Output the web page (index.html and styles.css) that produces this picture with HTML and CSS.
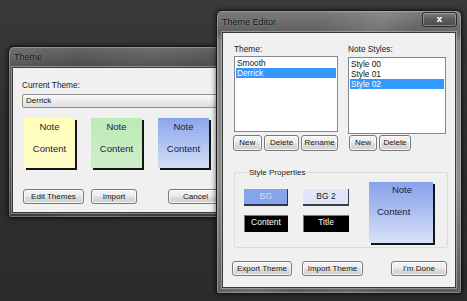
FILE: index.html
```html
<!DOCTYPE html>
<html lang="en">
<head>
<meta charset="utf-8">
<title>Theme Editor</title>
<link rel="stylesheet" href="styles.css">
</head>
<body>
<div class="desk">
  <div class="win back">
    <div class="tbar"><span class="ttl">Theme</span></div>
    <div class="client back-client">
      <div class="lbl">Current Theme:</div>
      <div class="combo">Derrick</div>
      <div class="notes">
        <div class="note yellow"><span class="n-title">Note</span><span class="n-body">Content</span></div>
        <div class="note green"><span class="n-title">Note</span><span class="n-body">Content</span></div>
        <div class="note blue"><span class="n-title">Note</span><span class="n-body">Content</span></div>
      </div>
      <div class="btnrow back-btns">
        <button class="btn b-edit">Edit Themes</button>
        <button class="btn b-imp">Import</button>
        <button class="btn b-cancel">Cancel</button>
      </div>
    </div>
  </div>

  <div class="win front">
    <div class="tbar"><span class="ttl">Theme Editor</span><span class="close">x</span></div>
    <div class="client front-client">
      <div class="lists">
        <div class="col col1">
          <div class="lbl">Theme:</div>
          <div class="listbox lb1">
            <div class="item">Smooth</div>
            <div class="item sel">Derrick</div>
          </div>
          <div class="btnrow sm-btns">
            <button class="btn w29">New</button>
            <button class="btn w36">Delete</button>
            <button class="btn w37">Rename</button>
          </div>
        </div>
        <div class="col col2">
          <div class="lbl">Note Styles:</div>
          <div class="listbox lb2">
            <div class="item">Style 00</div>
            <div class="item">Style 01</div>
            <div class="item sel">Style 02</div>
          </div>
          <div class="btnrow sm-btns2">
            <button class="btn w28">New</button>
            <button class="btn w32">Delete</button>
          </div>
        </div>
      </div>
      <fieldset class="group">
        <legend>Style Properties</legend>
        <div class="props">
          <div class="swgrid">
            <div class="sw sw-bg">BG</div>
            <div class="sw sw-bg2">BG 2</div>
            <div class="sw sw-blk">Content</div>
            <div class="sw sw-blk">Title</div>
          </div>
          <div class="preview"><span class="p-title">Note</span><span class="p-body">Content</span></div>
        </div>
      </fieldset>
      <div class="btnrow bottom-btns">
        <button class="btn w60">Export Theme</button>
        <button class="btn w61">Import Theme</button>
        <button class="btn w56 done">I'm Done</button>
      </div>
    </div>
  </div>
</div>
</body>
</html>
```

FILE: styles.css
```css
* { box-sizing: border-box; }
html, body { margin: 0; padding: 0; }
body {
  width: 467px;
  height: 301px;
  overflow: hidden;
  font-family: "Liberation Sans", Arial, sans-serif;
  font-size: 8px;
  color: #111;
}
.desk {
  position: relative;
  width: 467px;
  height: 301px;
  background: linear-gradient(180deg, #3a3a3a 0%, #303030 40%, #2b2b2b 100%);
}

/* windows */
.win {
  position: absolute;
  display: flex;
  flex-direction: column;
  border: 1px solid #161616;
  border-radius: 6px 6px 3px 3px;
  box-shadow: inset 0 0 0 1px rgba(255,255,255,0.28), 0 0 5px rgba(0,0,0,0.7);
}
.back {
  left: 8px; top: 46px; width: 230px; height: 172px;
  padding: 0 3px 4px 3px;
  background:
    linear-gradient(110deg, rgba(255,255,255,0.08) 0%, rgba(255,255,255,0) 25%, rgba(255,255,255,0.06) 50%, rgba(255,255,255,0) 70%),
    linear-gradient(180deg, #666 0px, #4a4a4a 20px, #505050 60%, #3c3c3c 100%);
}
.front {
  left: 216px; top: 10px; width: 246px; height: 284px;
  padding: 0 5px 5px 5px;
  background:
    linear-gradient(115deg, rgba(255,255,255,0) 30%, rgba(255,255,255,0.12) 45%, rgba(255,255,255,0) 55%, rgba(255,255,255,0.08) 70%, rgba(255,255,255,0) 80%),
    linear-gradient(180deg, #7c7c7c 0px, #5e5e5e 22px, #808080 30px, #8e8e8e 60%, #5a5a5a 100%);
}
.tbar {
  display: flex;
  align-items: center;
  flex: none;
}
.back .tbar { height: 20px; padding-left: 2px; }
.front .tbar { height: 21px; align-items: flex-start; }
.ttl {
  font-size: 9px;
  color: #101010;
  text-shadow: 0 0 2px rgba(255,255,255,0.35);
}
.front .ttl { margin-top: 6px; }
.close {
  margin-left: auto;
  margin-right: -1px;
  margin-top: 1px;
  width: 35px;
  height: 15px;
  border: 1px solid #2a2a2a;
  border-radius: 3px;
  background: linear-gradient(180deg, #7a7a7a 0%, #5b5b5b 50%, #4a4a4a 100%);
  box-shadow: inset 0 0 0 1px rgba(255,255,255,0.3);
  color: #fff;
  font-family: "DejaVu Sans", sans-serif;
  font-weight: bold;
  font-size: 9px;
  line-height: 12px;
  text-align: center;
}

.client {
  flex: 1;
  background: #f0f0f0;
  border: 1px solid #3a3a3a;
  box-shadow: 0 0 0 1px rgba(200,200,200,0.5);
}
.lbl { line-height: 11px; height: 11px; color: #1a1a1a; font-size: 8.3px; }

/* back window */
.back-client { padding: 12px 0 0 9px; }
.combo {
  margin-top: 3px;
  height: 14px;
  width: 230px;
  border: 1px solid #8e8e8e;
  border-radius: 2px;
  background: linear-gradient(180deg, #fafafa 0%, #ececec 50%, #dcdcdc 100%);
  padding-left: 3px;
  line-height: 12px;
}
.notes {
  display: flex;
  gap: 16px;
  margin-top: 10px;
  margin-left: 2px;
}
.note {
  width: 51px;
  height: 50px;
  display: flex;
  flex-direction: column;
  align-items: center;
  box-shadow: 2px 2px 0 #151515;
  font-size: 9.5px;
  color: #1e2046;
  line-height: 11px;
}
.n-title { margin-top: 3px; }
.n-body { margin-top: 11px; }
.yellow { background: linear-gradient(180deg, #fffeb8 0%, #fffdc8 100%); }
.green { background: linear-gradient(180deg, #bdeab6 0%, #cdefc8 100%); }
.blue { background: linear-gradient(180deg, #8aa5ec 0%, #b6c8f2 60%, #d3def7 100%); }

.btnrow { display: flex; }
.btn {
  font-family: "Liberation Sans", Arial, sans-serif;
  font-size: 8px;
  color: #161616;
  padding: 0;
  margin: 0;
  border: 1px solid #7a7a7a;
  border-radius: 3px;
  background: linear-gradient(180deg, #f4f4f4 0%, #ececec 48%, #dedede 52%, #d0d0d0 100%);
  box-shadow: inset 0 0 0 1px rgba(255,255,255,0.8);
  line-height: 13px;
  text-align: center;
}
.back-btns { margin-top: 21px; gap: 7px; margin-left: 1px; }
.back-btns .btn { height: 15px; }
.b-edit { width: 61px; }
.b-imp { width: 46px; }
.b-cancel { width: 55px; margin-left: 24px; }

/* front window */
.front-client { padding: 11px 9px 0 11px; display: flex; flex-direction: column; }
.lists { display: flex; gap: 10px; }
.col1 { width: 104px; }
.col2 { width: 101px; }
.listbox {
  background: #fff;
  border: 1px solid #828790;
  padding: 1px;
}
.lb1 { margin-top: 1px; height: 76px; }
.lb2 { margin-top: 2px; height: 77px; }
.item { height: 10px; line-height: 10px; padding-left: 1px; font-size: 8.3px; }
.item.sel { background: #3399ff; color: #fff; }
.sm-btns { margin-top: 3px; gap: 2px; margin-left: -1px; }
.sm-btns2 { margin-top: 1px; gap: 2px; margin-left: 1px; }
.sm-btns .btn, .sm-btns2 .btn { height: 16px; line-height: 14px; }
.w28 { width: 28px; } .w29 { width: 29px; } .w32 { width: 32px; }
.w36 { width: 36px; } .w37 { width: 37px; }
.w56 { width: 56px; } .w60 { width: 60px; } .w61 { width: 61px; }

.group {
  margin: 16px 0 0 0;
  width: 214px;
  border: 1px solid #dcdcdc;
  border-radius: 2px;
  padding: 4px 0 4px 9px;
  min-width: 0;
}
.group legend {
  padding: 0 2px;
  margin-left: 3px;
  line-height: 11px;
  color: #1a1a1a;
}
.props { display: flex; align-items: flex-start; }
.swgrid {
  display: grid;
  grid-template-columns: 44px 46px;
  grid-auto-rows: 17px;
  column-gap: 15px;
  row-gap: 9px;
  margin-top: 7px;
}
.sw {
  text-align: center;
  line-height: 15px;
  font-size: 8.5px;
}
.sw-bg {
  background: #86a4ea;
  color: #d4def8;
  box-shadow: inset -1px -2px 0 #2c3550;
}
.sw-bg2 {
  background: #dde5f7;
  color: #1a1a1a;
  box-shadow: inset -1px -2px 0 #3a3d48;
}
.sw-blk {
  background: #000;
  color: #fff;
  box-shadow: inset 1px 1px 0 #777;
}
.preview {
  margin-left: 20px;
  width: 64px;
  height: 61px;
  background: linear-gradient(180deg, #87a2ea 0%, #a9bdf0 45%, #d9e2f8 100%);
  box-shadow: 2px 2px 0 #151515;
  display: flex;
  flex-direction: column;
  font-size: 9.5px;
  color: #1e2046;
  line-height: 11px;
}
.p-title { text-align: center; margin-top: 2px; padding-left: 2px; }
.p-body { margin-top: 11px; padding-left: 8px; }

.bottom-btns { margin-top: 13px; gap: 10px; margin-left: -2px; }
.bottom-btns .btn { height: 15px; }
.done { margin-left: auto; margin-right: -1px; }
```
